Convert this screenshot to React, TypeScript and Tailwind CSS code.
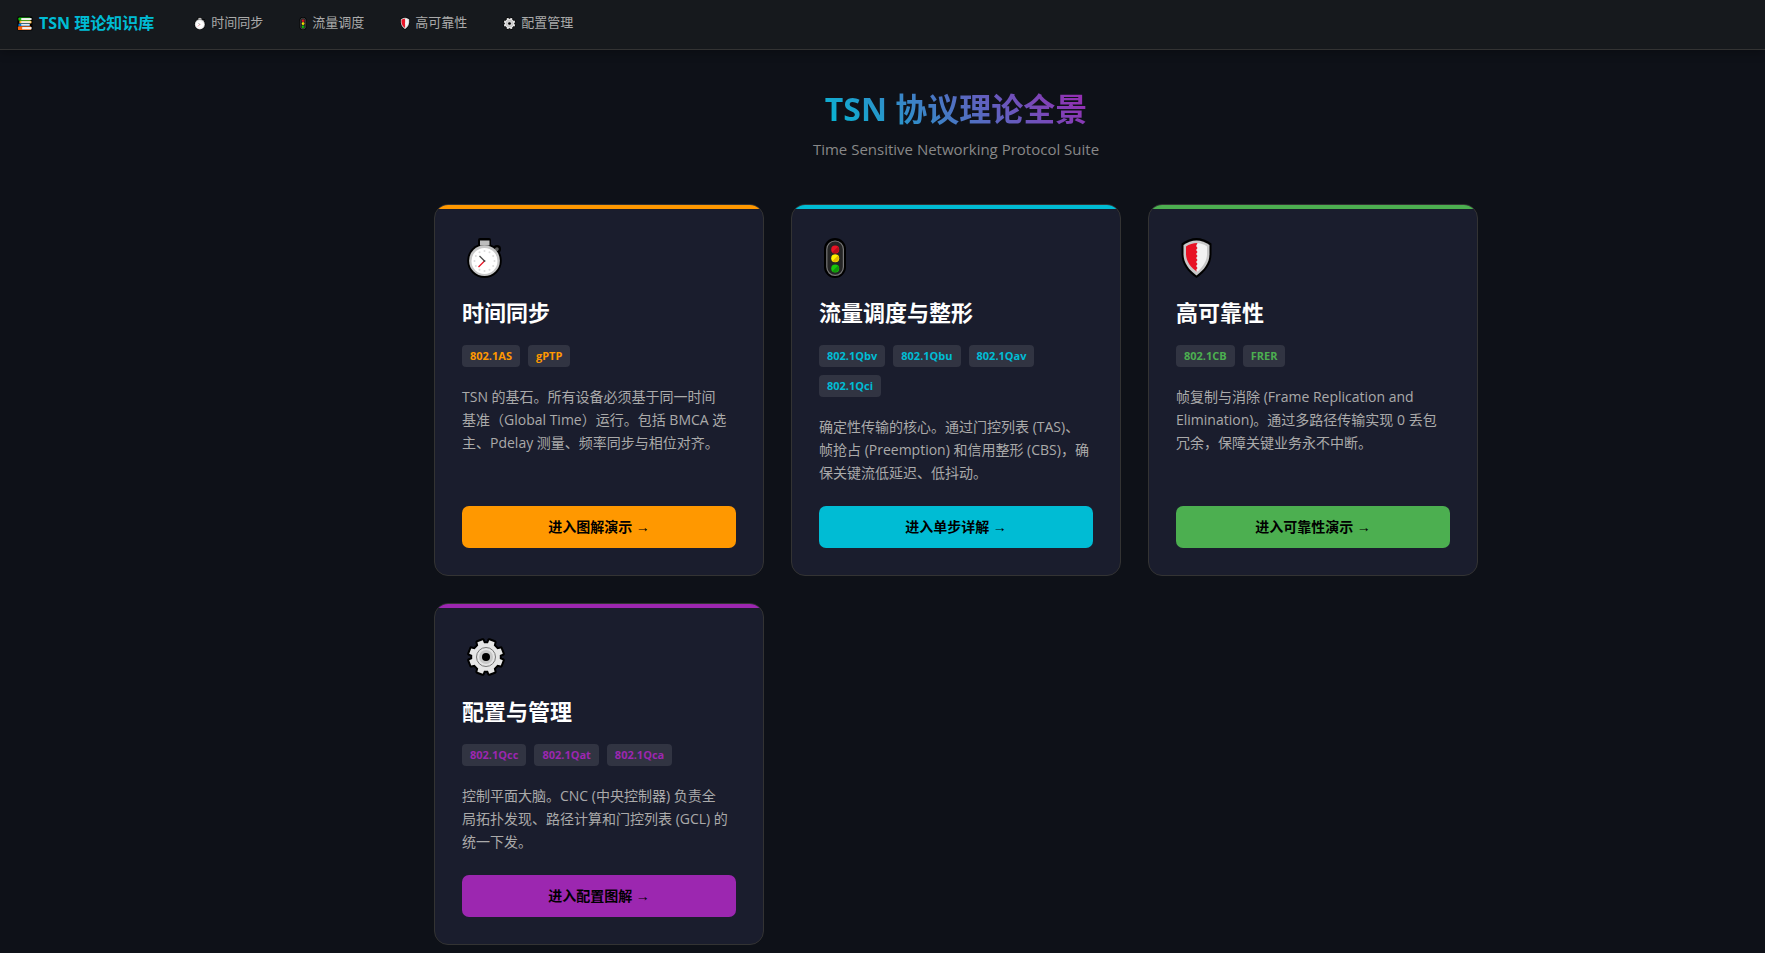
import type { ReactNode } from 'react';

type IconProps = { className?: string };

const BooksIcon = ({ className }: IconProps) => (
  <svg viewBox="0 0 16 16" className={className} aria-hidden="true">
    <rect x="0" y="0.5" width="16" height="15" rx="1.5" fill="#000" />
    <rect x="1" y="1.5" width="13" height="3.5" rx="1" fill="#16c60c" />
    <rect x="4" y="2.2" width="11" height="2.1" fill="#f2f2f2" />
    <rect x="2" y="5" width="13" height="3" rx="1" fill="#ffb02e" />
    <rect x="4" y="5.6" width="10" height="1.7" fill="#f2f2f2" />
    <rect x="1" y="8" width="12" height="3" rx="1" fill="#0078d7" />
    <rect x="4" y="8.6" width="9" height="1.6" fill="#f2f2f2" />
    <rect x="0.5" y="11" width="14" height="4" rx="1" fill="#f7630c" />
    <rect x="5" y="11.8" width="10" height="2.4" fill="#f2f2f2" />
  </svg>
);

const dots = Array.from({ length: 12 }, (_, i) => {
  const a = (i * Math.PI) / 6;
  return { x: 17.5 + Math.sin(a) * 10, y: 23 - Math.cos(a) * 10 };
});

const StopwatchIcon = ({ className }: IconProps) => (
  <svg viewBox="0 0 36 40" className={className} aria-hidden="true">
    <rect x="11" y="0" width="13" height="11" rx="2" fill="#000" />
    <circle cx="30" cy="11" r="4" fill="#000" />
    <circle cx="17.5" cy="22.7" r="17.3" fill="#000" />
    <path d="M26 15l4-4" stroke="#5a5a5a" strokeWidth="3.5" strokeLinecap="round" />
    <rect x="13" y="2.5" width="9.5" height="5" fill="#bdbdbd" />
    <circle cx="17.5" cy="22.7" r="15.4" fill="#c8c8c8" />
    <circle cx="17.5" cy="23" r="13" fill="#fff" />
    {dots.map((d, i) => (
      <circle key={i} cx={d.x} cy={d.y} r="1" fill="#dcdcdc" />
    ))}
    <path d="M12.5 18l5 5" stroke="#4a4a4a" strokeWidth="1.3" />
    <path d="M17.5 23l-6 6" stroke="#e81224" strokeWidth="1.3" />
    <circle cx="17.5" cy="23" r="1" fill="#4a4a4a" />
  </svg>
);

const TrafficIcon = ({ className }: IconProps) => (
  <svg viewBox="0 0 22 40" className={className} aria-hidden="true">
    <rect x="0" y="0" width="22" height="40" rx="11" fill="#000" />
    <rect x="2.8" y="3" width="16.6" height="34.4" rx="8.3" fill="#252525" stroke="#777" strokeWidth="1.2" />
    <circle cx="11.2" cy="11.5" r="4" fill="#e81224" />
    <circle cx="11.2" cy="20.3" r="4" fill="#fff100" />
    <circle cx="11.2" cy="30.5" r="4" fill="#16c60c" />
    <path d="M14 8.7a4 4 0 0 1-5.6 5.6z" fill="#b50e1c" />
    <path d="M14 17.5a4 4 0 0 1-5.6 5.6z" fill="#e3b800" />
    <path d="M14 27.7a4 4 0 0 1-5.6 5.6z" fill="#11960a" />
  </svg>
);

const ShieldIcon = ({ className }: IconProps) => (
  <svg viewBox="0 0 31 40" className={className} aria-hidden="true">
    <path d="M15.5 0C20 0 26 2 30.5 5.5V16C30.5 26 24 34 15.5 40C7 34 .5 26 .5 16V5.5C5 2 11 0 15.5 0z" fill="#000" />
    <path d="M15.5 2.5C20 2.5 25 4.5 28.5 7V16C28.5 25 23 32 15.5 37.5C8 32 2.5 25 2.5 16V7C6 4.5 11 2.5 15.5 2.5z" fill="#c8c8c8" />
    <path d="M15.5 5C19 5 23.5 6.3 26 8.5V16C26 23 22 29 15.5 34.5z" fill="#f2f2f2" />
    <path d="M16.5 5C12 5 8 6.3 5 8.5V16C5 23 10 30 16.5 34l-1.5-2 1.5-2-1.5-2 1.5-2-1.5-2 1.5-2-1.5-2 1.5-2-1.5-2 1.5-2-1.5-2 1.5-2-1.5-2z" fill="#e81224" />
  </svg>
);

const gearPath =
  'M17 5.2H21L22.2 2.2L27.6 4.2L26.8 7.6L30.4 11.2L33.8 10.4L35.8 15.8L32.8 17V21L35.8 22.2L33.8 27.6L30.4 26.8L26.8 30.4L27.6 33.8L22.2 35.8L21 32.8H17L15.8 35.8L10.4 33.8L11.2 30.4L7.6 26.8L4.2 27.6L2.2 22.2L5.2 21V17L2.2 15.8L4.2 10.4L7.6 11.2L11.2 7.6L10.4 4.2L15.8 2.2z';

const GearIcon = ({ className }: IconProps) => (
  <svg viewBox="0 0 38 38" className={className} aria-hidden="true">
    <path d={gearPath} fill="#e6e6e6" stroke="#000" strokeWidth="4" strokeLinejoin="round" />
    <path d={gearPath} fill="#e6e6e6" />
    <circle cx="19" cy="19" r="9.5" fill="#e6e6e6" stroke="#767676" strokeWidth="1" />
    <circle cx="19" cy="19" r="7" fill="#c8c8c8" />
    <circle cx="19" cy="19" r="4" fill="#000" />
  </svg>
);

const navItems = [
  { label: '时间同步', icon: <StopwatchIcon className="h-[13px] w-3" /> },
  { label: '流量调度', icon: <TrafficIcon className="h-[13px] w-2" /> },
  { label: '高可靠性', icon: <ShieldIcon className="h-[13px] w-[10px]" /> },
  { label: '配置管理', icon: <GearIcon className="h-[13px] w-[13px]" /> },
];

type Card = {
  title: string;
  icon: ReactNode;
  tags: string[];
  lines: string[];
  action: string;
  bar: string;
  text: string;
};

const cards: Card[] = [
  {
    title: '时间同步',
    icon: <StopwatchIcon className="h-10 w-9" />,
    tags: ['802.1AS', 'gPTP'],
    lines: ['TSN 的基石。所有设备必须基于同一时间', '基准（Global Time）运行。包括 BMCA 选', '主、Pdelay 测量、频率同步与相位对齐。'],
    action: '进入图解演示',
    bar: 'bg-[#ff9800]',
    text: 'text-[#ff9800]',
  },
  {
    title: '流量调度与整形',
    icon: <TrafficIcon className="h-10 w-[22px]" />,
    tags: ['802.1Qbv', '802.1Qbu', '802.1Qav', '802.1Qci'],
    lines: ['确定性传输的核心。通过门控列表 (TAS)、', '帧抢占 (Preemption) 和信用整形 (CBS)，确', '保关键流低延迟、低抖动。'],
    action: '进入单步详解',
    bar: 'bg-[#00bcd4]',
    text: 'text-[#00bcd4]',
  },
  {
    title: '高可靠性',
    icon: <ShieldIcon className="h-10 w-[31px]" />,
    tags: ['802.1CB', 'FRER'],
    lines: ['帧复制与消除 (Frame Replication and', 'Elimination)。通过多路径传输实现 0 丢包', '冗余，保障关键业务永不中断。'],
    action: '进入可靠性演示',
    bar: 'bg-[#4caf50]',
    text: 'text-[#4caf50]',
  },
  {
    title: '配置与管理',
    icon: <GearIcon className="h-[38px] w-[38px]" />,
    tags: ['802.1Qcc', '802.1Qat', '802.1Qca'],
    lines: ['控制平面大脑。CNC (中央控制器) 负责全', '局拓扑发现、路径计算和门控列表 (GCL) 的', '统一下发。'],
    action: '进入配置图解',
    bar: 'bg-[#9c27b0]',
    text: 'text-[#9c27b0]',
  },
];

function TheoryCard({ card }: { card: Card }) {
  return (
    <article className="flex flex-col overflow-hidden rounded-[14px] border border-[#333] bg-[#1a1d2d]">
      <div className={`h-1 shrink-0 ${card.bar}`} />
      <div className="flex flex-1 flex-col px-[27px] pt-[29px] pb-[27px]">
        <div className="flex h-10 items-center pl-[5px]">{card.icon}</div>
        <h2 className="mt-[19px] text-[22px] leading-[30px] font-bold text-white">{card.title}</h2>
        <div className="mt-[18px] flex flex-wrap gap-2">
          {card.tags.map((tag) => (
            <span key={tag} className={`rounded bg-[#313442] px-2 text-[11px] leading-[22px] font-bold ${card.text}`}>
              {tag}
            </span>
          ))}
        </div>
        <p className="mt-[18px] mb-[22px] flex-1 text-[14px] leading-[23px] text-[#aaa]">
          {card.lines.map((line) => (
            <span key={line} className="block whitespace-nowrap">{line}</span>
          ))}
        </p>
        <button type="button" className={`h-[42px] cursor-pointer rounded-[7px] text-[14px] font-bold text-black ${card.bar}`}>
          {card.action} <span className="font-['Liberation_Sans',sans-serif] font-normal">→</span>
        </button>
      </div>
    </article>
  );
}

export default function App() {
  return (
    <div className="min-h-screen bg-[#0e1118] font-['Open_Sans','Noto_Sans_CJK_SC',sans-serif] text-white">
      <nav className="flex h-[50px] items-center border-b border-[#333] bg-[#16191d] px-[17px] pb-[3px] shadow-[0_2px_10px_rgba(0,0,0,0.3)]">
        <a href="#" className="mr-10 flex items-center gap-[6px] text-[16px] font-bold text-[#00bcd4]">
          <BooksIcon className="h-[15px] w-4" />
          TSN 理论知识库
        </a>
        <div className="flex gap-9">
          {navItems.map((item) => (
            <a key={item.label} href="#" className="flex items-center gap-[5px] text-[13px] text-[#aaa]">
              {item.icon}
              {item.label}
            </a>
          ))}
        </div>
      </nav>

      <main className="pl-[147px]">
        <div className="mx-auto max-w-[1044px] pt-9 pb-2">
          <header className="flex flex-col items-center">
            <h1 className="bg-linear-45/srgb from-[#00bcd4] to-[#9c27b0] bg-clip-text text-[32px] leading-[46px] font-bold text-transparent">
              TSN 协议理论全景
            </h1>
            <p className="mt-[5px] text-[15px] leading-6 text-[#888]">Time Sensitive Networking Protocol Suite</p>
          </header>
          <div className="mt-[43px] grid grid-cols-3 gap-[27px]">
            {cards.map((card) => (
              <TheoryCard key={card.title} card={card} />
            ))}
          </div>
        </div>
      </main>
    </div>
  );
}
